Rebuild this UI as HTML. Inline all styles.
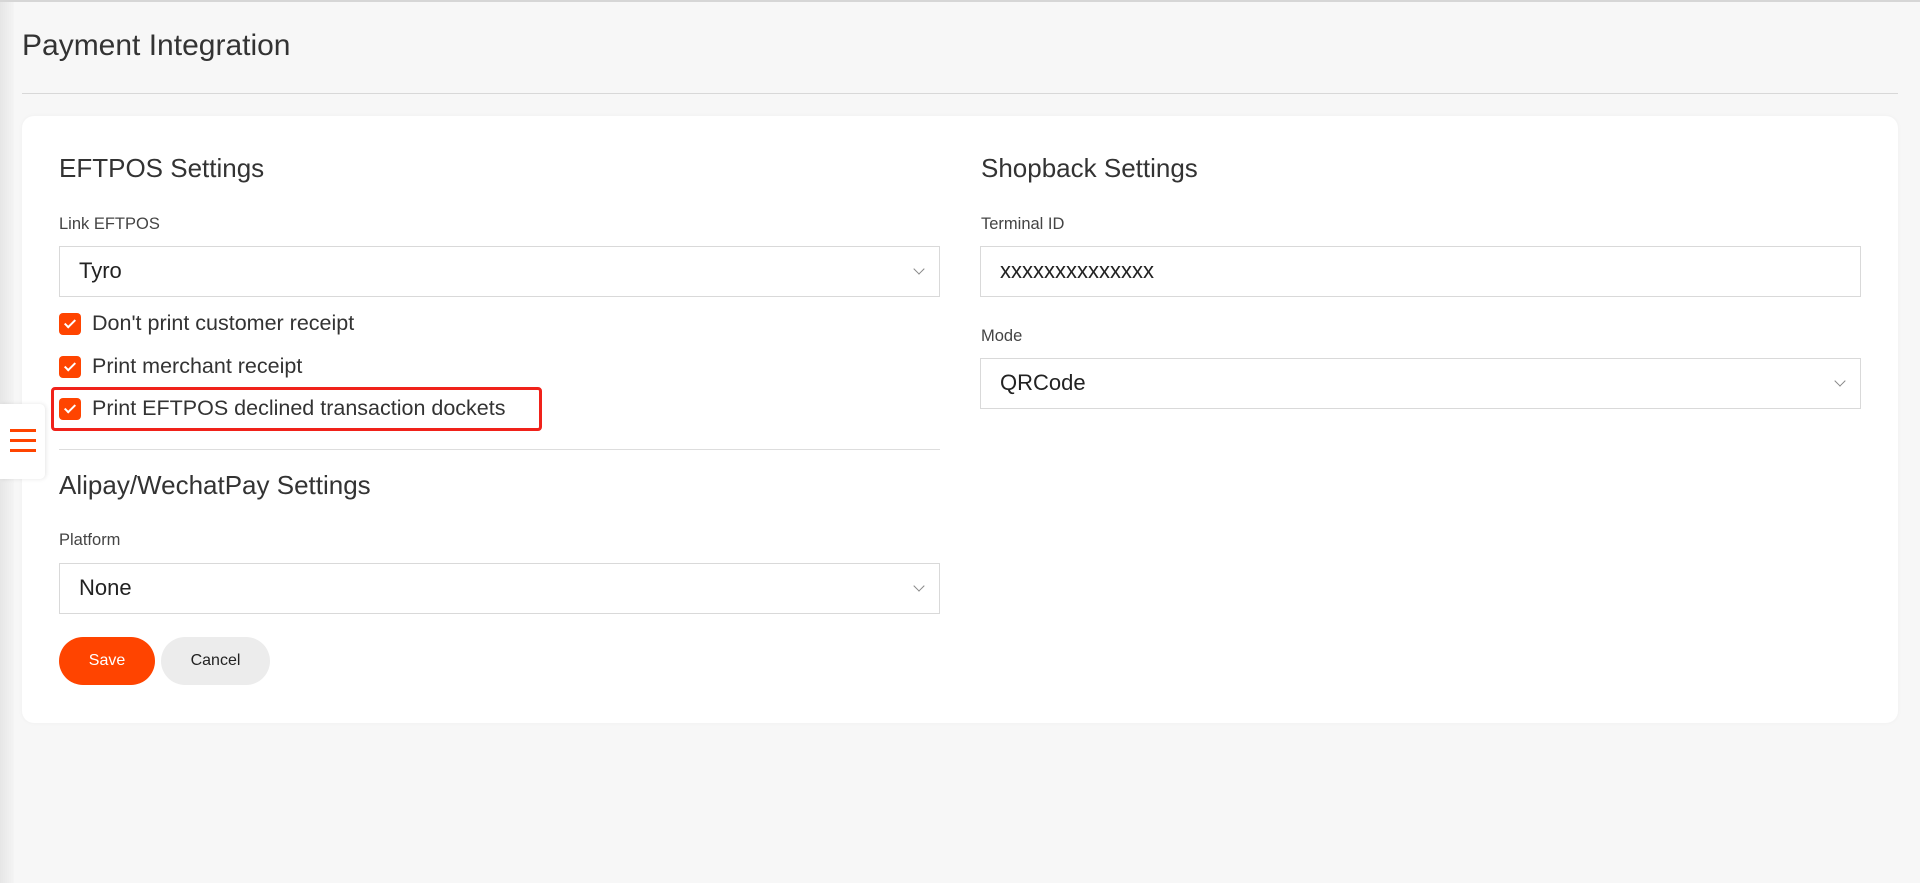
<!DOCTYPE html>
<html><head><meta charset="utf-8"><style>
*{box-sizing:border-box;margin:0;padding:0}
body{width:1920px;height:881px;overflow:hidden;background:#f7f7f7;font-family:"Liberation Sans",sans-serif;color:#333;position:relative;border-top:2px solid #d6d6d6}
.edge{position:absolute;left:0;top:0;width:14px;height:881px;background:linear-gradient(90deg,#e6e6e6,#f4f4f4)}
.title{position:absolute;left:22px;top:27px;font-size:30px;color:#333}
.hr{position:absolute;left:22px;top:91px;width:1876px;height:1px;background:#d8d8d8}
.card{position:absolute;left:22px;top:114px;width:1876px;height:607px;background:#fff;border-radius:12px;box-shadow:0 0 4px rgba(0,0,0,.04)}
.abs{position:absolute}
h2{position:absolute;font-weight:normal;font-size:26px;color:#333}
.lbl{position:absolute;font-size:16.5px;color:#444}
.inp{position:absolute;height:51px;border:1px solid #d9d9d9;background:#fff;font-size:22px;color:#222;padding-left:19px;line-height:48px}
.chev{position:absolute;right:16px;top:18px;width:8px;height:8px;border-right:1.5px solid #888;border-bottom:1.5px solid #888;transform:rotate(45deg)}
.cb{position:absolute;width:22px;height:22px;background:#ff4400;border-radius:4px}
.cb:after{content:"";position:absolute;left:8px;top:4px;width:4px;height:9px;border-right:2.5px solid #fff;border-bottom:2.5px solid #fff;transform:rotate(45deg)}
.ct{position:absolute;font-size:21.5px;color:#333}
.btn{position:absolute;height:48px;border-radius:24px;font-size:16px;text-align:center;line-height:48px}
</style></head><body>
<div class="edge"></div>
<div class="title">Payment Integration</div>
<div class="hr"></div>
<div class="card"></div>
<h2 style="left:59px;top:151px">EFTPOS Settings</h2>
<div class="lbl" style="left:59px;top:213px">Link EFTPOS</div>
<div class="inp" style="left:59px;top:244px;width:881px">Tyro<span class="chev"></span></div>
<div class="cb" style="left:59px;top:311px"></div><div class="ct" style="left:92px;top:309px">Don't print customer receipt</div>
<div class="cb" style="left:59px;top:354px"></div><div class="ct" style="left:92px;top:352px">Print merchant receipt</div>
<div class="abs" style="left:51px;top:385px;width:491px;height:44px;border:3px solid #f0221a;border-radius:4px"></div>
<div class="cb" style="left:59px;top:396px"></div><div class="ct" style="left:92px;top:394px">Print EFTPOS declined transaction dockets</div>
<div class="abs" style="left:59px;top:447px;width:881px;height:1px;background:#ddd"></div>
<h2 style="left:59px;top:468px">Alipay/WechatPay Settings</h2>
<div class="lbl" style="left:59px;top:529px">Platform</div>
<div class="inp" style="left:59px;top:561px;width:881px">None<span class="chev"></span></div>
<div class="btn" style="left:59px;top:635px;width:96px;background:#ff4400;color:#fff">Save</div>
<div class="btn" style="left:161px;top:635px;width:109px;background:#ececec;color:#222">Cancel</div>
<h2 style="left:981px;top:151px">Shopback Settings</h2>
<div class="lbl" style="left:981px;top:213px">Terminal ID</div>
<div class="inp" style="left:980px;top:244px;width:881px">xxxxxxxxxxxxxx</div>
<div class="lbl" style="left:981px;top:325px">Mode</div>
<div class="inp" style="left:980px;top:356px;width:881px">QRCode<span class="chev"></span></div>
<div class="abs" style="left:0;top:402px;width:45px;height:75px;background:#fff;border-radius:0 5px 5px 0;box-shadow:1px 0 4px rgba(0,0,0,.1)"></div>
<div class="abs" style="left:10px;top:427px;width:26px;height:2.5px;background:#ff4400"></div>
<div class="abs" style="left:10px;top:437px;width:26px;height:2.5px;background:#ff4400"></div>
<div class="abs" style="left:10px;top:447px;width:26px;height:2.5px;background:#ff4400"></div>
</body></html>
